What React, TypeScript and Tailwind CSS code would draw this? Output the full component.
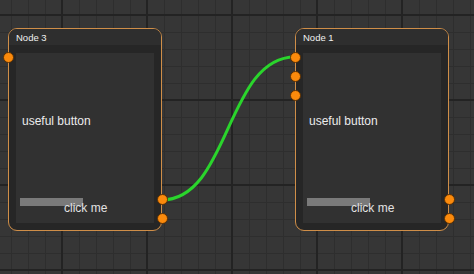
import React from "react";

type NodeProps = {
  title: string;
  left: string;
  leftPorts: string[];
  rightPorts: string[];
};

function Port({ pos }: { pos: string }) {
  return (
    <div
      className={`absolute w-[11px] h-[11px] rounded-full bg-[#fb8a0c] border border-[#5a3004] ${pos}`}
    />
  );
}

function Node({ title, left, leftPorts, rightPorts }: NodeProps) {
  return (
    <div
      className={`absolute top-[28px] ${left} w-[154px] h-[203px] rounded-[9px] border border-[#cf8e48] bg-[#262626] flex flex-col`}
    >
      <div className="h-[16px] rounded-t-[8px] bg-[#2e2e2e] pl-[7px] text-[9.5px] leading-[17px] text-[#f0f0f0] font-['Liberation_Sans',sans-serif]">
        {title}
      </div>
      <div className="flex-1 px-[7px] pt-[8px] pb-[7px]">
        <div className="h-full bg-[#313131] flex flex-col pl-[6px] font-['Liberation_Sans',sans-serif]">
          <div className="mt-[60px] text-[12px] leading-[16px] text-[#ececec]">useful button</div>
          <div className="mt-[69px] -ml-[2px] w-[63px] h-[8px] bg-[#7a7a7a]" />
          <div className="-mt-[5px] ml-[42px] text-[12px] leading-[14px] text-[#e2e2e2]">click me</div>
        </div>
      </div>
      {leftPorts.map((p, i) => (
        <Port key={"l" + i} pos={`-left-[6.5px] ${p}`} />
      ))}
      {rightPorts.map((p, i) => (
        <Port key={"r" + i} pos={`-right-[6.5px] ${p}`} />
      ))}
    </div>
  );
}

export default function App() {
  return (
    <div className="relative w-[474px] h-[274px] overflow-hidden bg-[#363636] [background-image:linear-gradient(#232323_2px,transparent_2px),linear-gradient(90deg,#232323_2px,transparent_2px),linear-gradient(#2e2e2e_1px,transparent_1px),linear-gradient(90deg,#2e2e2e_1px,transparent_1px)] [background-size:85px_85px,85px_85px,17px_17px,17px_17px] [background-position:62px_14px,61px_15px,11px_15px,11px_15px]">
      <svg className="absolute inset-0" width="474" height="274">
        <path
          d="M161.5 200 C 230 200, 226 57, 295 57"
          fill="none"
          stroke="#2ad52c"
          strokeWidth="3"
        />
      </svg>
      <Node
        title="Node 3"
        left="left-[8px]"
        leftPorts={["top-[23px]"]}
        rightPorts={["top-[165px]", "top-[184px]"]}
      />
      <Node
        title="Node 1"
        left="left-[295px]"
        leftPorts={["top-[23px]", "top-[42px]", "top-[61px]"]}
        rightPorts={["top-[165px]", "top-[184px]"]}
      />
    </div>
  );
}
